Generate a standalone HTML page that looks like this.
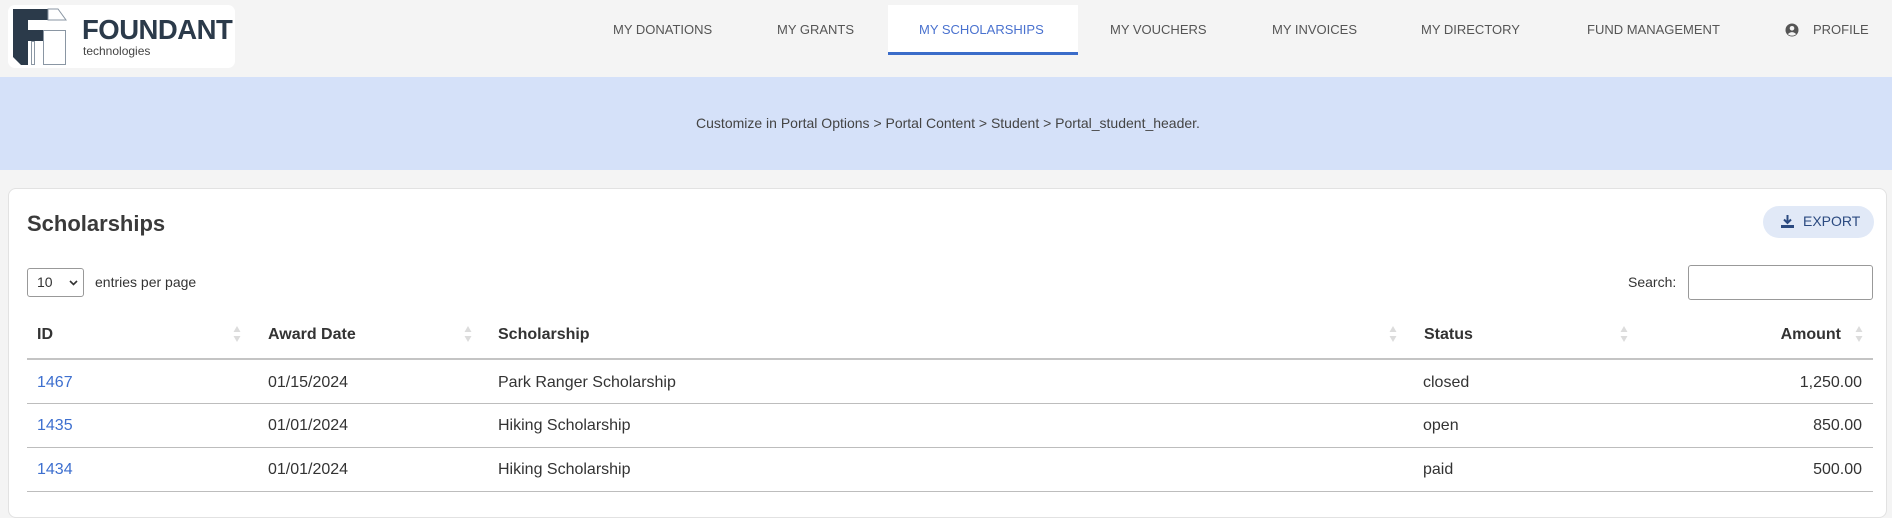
<!DOCTYPE html>
<html><head><meta charset="utf-8"><style>
*{box-sizing:border-box;margin:0;padding:0}
body{width:1892px;height:502px;overflow:hidden;background:#f4f4f4;font-family:"Liberation Sans",Arial,sans-serif;color:#333;position:relative}
.abs{position:absolute}
.nav{font-size:13px;color:#555;white-space:nowrap;top:22px;line-height:15px}
.banner{top:77px;left:0;width:1892px;height:93px;background:#d5e1f9}
.card{top:188px;left:8px;width:1879px;height:330px;background:#fff;border:1px solid #e2e2e2;border-radius:8px}
.t{font-size:16px;white-space:nowrap;line-height:18px}
.h{font-weight:bold;color:#333}
.line{left:27px;width:1846px;height:1px;background:#bdbdbd}
.link{color:#3d6fcf}
.sort{width:8px;height:16px}
</style></head><body>
<div class="abs" style="left:8px;top:5px;width:227px;height:63px;background:#fff;border-radius:7px"></div>
<svg class="abs" style="left:8px;top:5px" width="80" height="63" viewBox="0 0 80 63">
<path d="M5 4 H40 V15 H20 V25 H35 V36 H20 V60 L13 60 L5 52 Z" fill="#2b3a4a"/>
<path d="M40 4 L50 4 L58 15 L40 15 Z" fill="#fff" stroke="#8a96a3" stroke-width="1"/>
<rect x="23.5" y="36.5" width="3" height="23" fill="none" stroke="#8a96a3" stroke-width="1"/>
<rect x="35.5" y="25.5" width="22" height="34" fill="none" stroke="#8a96a3" stroke-width="1"/>
</svg>
<div class="abs" style="left:82px;top:15px;font-size:27.5px;font-weight:bold;color:#2b3a4a;letter-spacing:-0.5px;line-height:30px">FOUNDANT</div>
<div class="abs" style="left:83px;top:44px;font-size:12px;color:#444;line-height:14px">technologies</div>

<div class="abs" style="left:888px;top:5px;width:190px;height:50px;background:#fff;border-bottom:3px solid #3a6cc9"></div>
<div class="abs nav" style="left:613px">MY DONATIONS</div>
<div class="abs nav" style="left:777px">MY GRANTS</div>
<div class="abs nav" style="left:919px;color:#4a72cf">MY SCHOLARSHIPS</div>
<div class="abs nav" style="left:1110px">MY VOUCHERS</div>
<div class="abs nav" style="left:1272px">MY INVOICES</div>
<div class="abs nav" style="left:1421px">MY DIRECTORY</div>
<div class="abs nav" style="left:1587px">FUND MANAGEMENT</div>
<svg class="abs" style="left:1785px;top:23px" width="14" height="14" viewBox="0 0 14 14"><circle cx="7" cy="7" r="6.5" fill="#555"/><circle cx="7" cy="5.3" r="2.3" fill="#f4f4f4"/><path d="M2.8 11.2 Q7 7 11.2 11.2 Q7 14 2.8 11.2Z" fill="#f4f4f4"/></svg>
<div class="abs nav" style="left:1813px">PROFILE</div>

<div class="abs banner"></div>
<div class="abs" style="left:2px;width:1892px;top:115px;text-align:center;font-size:14px;color:#444;line-height:17px">Customize in Portal Options &gt; Portal Content &gt; Student &gt; Portal_student_header.</div>

<div class="abs card"></div>
<div class="abs" style="left:27px;top:211px;font-size:22px;font-weight:bold;color:#3a3a3a;line-height:26px">Scholarships</div>
<div class="abs" style="left:1763px;top:206px;width:111px;height:32px;border-radius:16px;background:#e1e9f7"></div>
<svg class="abs" style="left:1780px;top:214px" width="15" height="15" viewBox="0 0 15 15"><path d="M7.5 1 V9 M4 5.5 L7.5 9 L11 5.5" stroke="#2b4a80" stroke-width="2" fill="none"/><rect x="1" y="11" width="13" height="3" fill="#2b4a80"/></svg>
<div class="abs" style="left:1803px;top:213px;font-size:14px;color:#2b4a80;line-height:17px">EXPORT</div>

<div class="abs" style="left:27px;top:268px;width:57px;height:29px;border:1px solid #999;border-radius:3px"></div>
<div class="abs" style="left:37px;top:274px;font-size:14px;line-height:17px">10</div>
<svg class="abs" style="left:69px;top:280px" width="9" height="6" viewBox="0 0 9 6"><path d="M1 1 L4.5 4.5 L8 1" stroke="#333" stroke-width="1.6" fill="none"/></svg>
<div class="abs" style="left:95px;top:274px;font-size:14px;line-height:17px">entries per page</div>
<div class="abs" style="left:1628px;top:274px;font-size:14px;line-height:17px">Search:</div>
<div class="abs" style="left:1688px;top:265px;width:185px;height:35px;border:1px solid #999;border-radius:3px"></div>

<div class="abs t h" style="left:37px;top:326px">ID</div>
<div class="abs t h" style="left:268px;top:326px">Award Date</div>
<div class="abs t h" style="left:498px;top:326px">Scholarship</div>
<div class="abs t h" style="left:1424px;top:326px">Status</div>
<div class="abs t h" style="left:1741px;top:326px;width:100px;text-align:right">Amount</div>
<svg width="0" height="0" style="position:absolute"><defs><g id="s"><path d="M4 0 L7.5 6 H0.5Z M4 16 L7.5 10 H0.5Z" fill="#dcdcdc"/></g></defs></svg>
<svg class="abs sort" style="left:233px;top:326px"><use href="#s"/></svg>
<svg class="abs sort" style="left:464px;top:326px"><use href="#s"/></svg>
<svg class="abs sort" style="left:1389px;top:326px"><use href="#s"/></svg>
<svg class="abs sort" style="left:1620px;top:326px"><use href="#s"/></svg>
<svg class="abs sort" style="left:1855px;top:326px"><use href="#s"/></svg>

<div class="abs line" style="top:358px;height:2px;background:#c4c4c4"></div>
<div class="abs line" style="top:403px"></div>
<div class="abs line" style="top:447px"></div>
<div class="abs line" style="top:491px"></div>

<div class="abs t link" style="left:37px;top:374px">1467</div>
<div class="abs t" style="left:268px;top:374px">01/15/2024</div>
<div class="abs t" style="left:498px;top:374px">Park Ranger Scholarship</div>
<div class="abs t" style="left:1423px;top:374px">closed</div>
<div class="abs t" style="left:1762px;top:374px;width:100px;text-align:right">1,250.00</div>

<div class="abs t link" style="left:37px;top:417px">1435</div>
<div class="abs t" style="left:268px;top:417px">01/01/2024</div>
<div class="abs t" style="left:498px;top:417px">Hiking Scholarship</div>
<div class="abs t" style="left:1423px;top:417px">open</div>
<div class="abs t" style="left:1762px;top:417px;width:100px;text-align:right">850.00</div>

<div class="abs t link" style="left:37px;top:461px">1434</div>
<div class="abs t" style="left:268px;top:461px">01/01/2024</div>
<div class="abs t" style="left:498px;top:461px">Hiking Scholarship</div>
<div class="abs t" style="left:1423px;top:461px">paid</div>
<div class="abs t" style="left:1762px;top:461px;width:100px;text-align:right">500.00</div>
</body></html>
